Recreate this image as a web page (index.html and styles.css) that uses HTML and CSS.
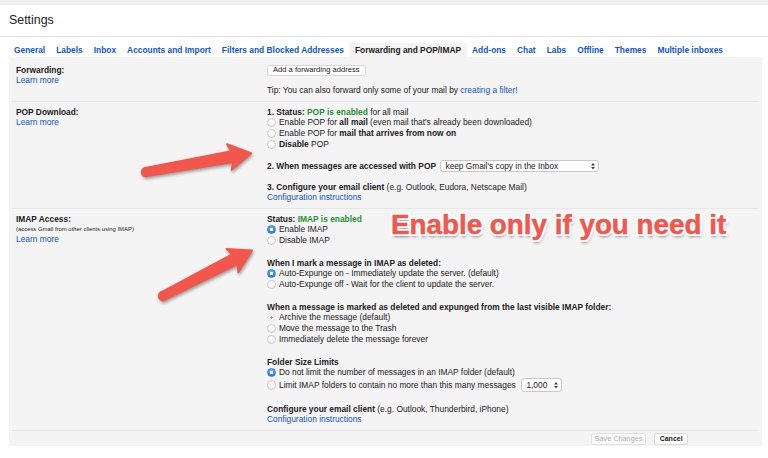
FILE: index.html
```html
<!DOCTYPE html>
<html>
<head>
<meta charset="utf-8">
<title>Settings</title>
<link rel="stylesheet" href="styles.css">
</head>
<body>
<div class="topbar"></div>
<header class="header"><h1 class="title">Settings</h1></header>
<nav class="tabs">
  <a class="tab">General</a>
  <a class="tab">Labels</a>
  <a class="tab">Inbox</a>
  <a class="tab">Accounts and Import</a>
  <a class="tab">Filters and Blocked Addresses</a>
  <a class="tab active">Forwarding and POP/IMAP</a>
  <a class="tab">Add-ons</a>
  <a class="tab">Chat</a>
  <a class="tab">Labs</a>
  <a class="tab">Offline</a>
  <a class="tab">Themes</a>
  <a class="tab">Multiple inboxes</a>
</nav>
<main class="content">
  <section class="row row-tight">
    <div class="label">
      <div class="label-title">Forwarding:</div>
      <a class="link link-block">Learn more</a>
    </div>
    <div class="value">
      <div class="block"><button class="btn btn-forward">Add a forwarding address</button></div>
      <div class="block">Tip: You can also forward only some of your mail by <a class="link">creating a filter!</a></div>
    </div>
  </section>

  <section class="row row-tight">
    <div class="label">
      <div class="label-title">POP Download:</div>
      <a class="link link-block">Learn more</a>
    </div>
    <div class="value">
      <div class="block">
        <div class="line"><b>1. Status: </b><b class="ok">POP is enabled</b> for all mail</div>
        <div class="opt"><span class="radio"></span><span>Enable POP for <b>all mail</b> (even mail that's already been downloaded)</span></div>
        <div class="opt"><span class="radio"></span><span>Enable POP for <b>mail that arrives from now on</b></span></div>
        <div class="opt"><span class="radio"></span><span><b>Disable</b> POP</span></div>
      </div>
      <div class="block line-select">
        <b>2. When messages are accessed with POP</b>
        <span class="select select-wide"><span>keep Gmail's copy in the Inbox</span><svg class="updown" viewBox="0 0 5 8"><path d="M2.5 0 L4.8 3 H0.2 Z M2.5 8 L4.8 5 H0.2 Z"/></svg></span>
      </div>
      <div class="block">
        <div class="line"><b>3. Configure your email client</b> (e.g. Outlook, Eudora, Netscape Mail)</div>
        <a class="link link-block">Configuration instructions</a>
      </div>
    </div>
  </section>

  <section class="row">
    <div class="label">
      <div class="label-title">IMAP Access:</div>
      <div class="label-note">(access Gmail from other clients using IMAP)</div>
      <a class="link link-block">Learn more</a>
    </div>
    <div class="value">
      <div class="block">
        <div class="line"><b>Status: </b><b class="ok">IMAP is enabled</b></div>
        <div class="opt"><span class="radio on"></span><span>Enable IMAP</span></div>
        <div class="opt"><span class="radio"></span><span>Disable IMAP</span></div>
      </div>
      <div class="block">
        <div class="line"><b>When I mark a message in IMAP as deleted:</b></div>
        <div class="opt"><span class="radio on"></span><span>Auto-Expunge on - Immediately update the server. (default)</span></div>
        <div class="opt"><span class="radio"></span><span>Auto-Expunge off - Wait for the client to update the server.</span></div>
      </div>
      <div class="block">
        <div class="line"><b>When a message is marked as deleted and expunged from the last visible IMAP folder:</b></div>
        <div class="opt"><span class="radio dim"></span><span>Archive the message (default)</span></div>
        <div class="opt"><span class="radio"></span><span>Move the message to the Trash</span></div>
        <div class="opt"><span class="radio"></span><span>Immediately delete the message forever</span></div>
      </div>
      <div class="block">
        <div class="line"><b>Folder Size Limits</b></div>
        <div class="opt"><span class="radio on"></span><span>Do not limit the number of messages in an IMAP folder (default)</span></div>
        <div class="opt opt-tall"><span class="radio"></span><span>Limit IMAP folders to contain no more than this many messages</span>
          <span class="select select-small"><span>1,000</span><svg class="updown" viewBox="0 0 5 8"><path d="M2.5 0 L4.8 3 H0.2 Z M2.5 8 L4.8 5 H0.2 Z"/></svg></span>
        </div>
      </div>
      <div class="block">
        <div class="line"><b>Configure your email client</b> (e.g. Outlook, Thunderbird, iPhone)</div>
        <a class="link link-block">Configuration instructions</a>
      </div>
    </div>
  </section>

  <div class="actions">
    <button class="btn btn-save" disabled>Save Changes</button>
    <button class="btn btn-cancel">Cancel</button>
  </div>
</main>

<svg class="annot" width="768" height="458" viewBox="0 0 768 458">
  <g fill="#f3564b" stroke="#f3564b" stroke-width="2" stroke-linejoin="round">
    <g transform="translate(146 172) rotate(-10.16)">
      <circle cx="0" cy="0" r="4.2"/>
      <polygon points="0,-4 87.7,-5.5 84.7,-13 106.7,0 84.7,13 87.7,5.5 0,4"/>
    </g>
    <g transform="translate(163 296) rotate(-27.07)">
      <circle cx="0" cy="0" r="4.2"/>
      <polygon points="0,-4 81,-5.5 78,-13 100,0 78,13 81,5.5 0,4"/>
    </g>
  </g>
</svg>
<div class="callout">Enable only if you need it</div>
</body>
</html>
```
FILE: styles.css
```css
* { box-sizing: border-box; }
html, body { margin: 0; padding: 0; }
body {
  width: 768px;
  height: 458px;
  overflow: hidden;
  position: relative;
  background: #fff;
  color: #222;
  font-family: "Liberation Sans", Arial, sans-serif;
}

.topbar { height: 5px; background: #efefef; }

.header {
  height: 32px;
  border-bottom: 1px solid #e6e6e6;
  padding-left: 9px;
  display: flex;
  align-items: center;
}
.title {
  margin: 0;
  font-size: 12.4px;
  font-weight: normal;
  line-height: 1;
  color: #222;
}

.tabs {
  display: flex;
  padding: 6px 0 0 8.5px;
}
.tab {
  padding: 0 5.5px;
  font-size: 8.4px;
  font-weight: bold;
  line-height: 14px;
  color: #15c;
  text-decoration: none;
  white-space: nowrap;
}
.tab.active { background: #f4f4f4; color: #222; }

.content {
  margin: 0 6px 0 9px;
  background: #f4f4f4;
  padding: 3px 3px 1.5px;
}

.row {
  display: grid;
  grid-template-columns: 251px 1fr;
  padding: 5px 0 5px 4px;
  border-bottom: 1px solid #e7e7e7;
}

.label {
  font-size: 8.4px;
  line-height: 10px;
}
.label-title { font-weight: bold; }
.label-note { font-size: 5.9px; line-height: 10px; }

.link { color: #15c; text-decoration: none; }
.link-block { display: block; }

.value {
  font-size: 8.4px;
  line-height: 10.5px;
  white-space: nowrap;
}
.value .block + .block { margin-top: 11.5px; }
.row-tight .value .block + .block { margin-top: 9.5px; }

.ok { color: #1f9330; }

.opt {
  display: flex;
  align-items: center;
  height: 11px;
  gap: 2.6px;
}
.opt-tall { height: 14px; }

.radio {
  flex: none;
  width: 9.4px;
  height: 9.4px;
  border-radius: 50%;
  border: 1px solid #cacaca;
  background: linear-gradient(#ffffff, #f1f1f1);
}
.radio.on {
  border-color: #2f7de2;
  background:
    radial-gradient(circle, #fff 0, #fff 1.4px, rgba(255,255,255,0) 1.9px),
    linear-gradient(#68acf8, #2a7ae0);
}
.radio.dim {
  border-color: #e3e3e3;
  background:
    radial-gradient(circle, #9a9a9a 0, #9a9a9a 0.9px, rgba(0,0,0,0) 1.4px),
    #f6f6f6;
}

.line-select {
  display: flex;
  align-items: center;
  height: 12.5px;
}

.select {
  display: inline-flex;
  align-items: center;
  justify-content: space-between;
  background: #fff;
  border: 1px solid #c8c8c8;
  border-radius: 3px;
  color: #222;
  font-size: 8.3px;
  line-height: 1;
}
.select-wide {
  width: 159px;
  height: 12.5px;
  margin-left: 4.5px;
  padding: 0 3px 0 4px;
}
.select-small {
  width: 41.5px;
  height: 13.5px;
  margin-left: 2.5px;
  padding: 0 3px 0 4.5px;
  font-size: 8.4px;
}
.updown { width: 4px; height: 6.5px; fill: #333; }

.btn {
  font-family: "Liberation Sans", Arial, sans-serif;
  background: #fff;
  border: 1px solid #d8d8d8;
  border-radius: 2px;
  color: #222;
  margin: 0;
}
.btn-forward {
  display: block;
  height: 10.5px;
  padding: 0 5px;
  font-size: 7.6px;
  line-height: 8px;
}

.actions {
  display: flex;
  justify-content: flex-end;
  gap: 8.3px;
  padding: 2.5px 71px 0 0;
}
.btn-save, .btn-cancel {
  height: 11.7px;
  font-size: 7.3px;
  line-height: 9px;
}
.btn-save {
  width: 55px;
  padding: 0;
  color: #b3b3b3;
  background: #f9f9f9;
  border-color: #e2e2e2;
}
.btn-cancel {
  width: 33.7px;
  padding: 0;
  font-weight: bold;
  font-size: 7px;
}

.annot {
  position: absolute;
  left: 0;
  top: 0;
  pointer-events: none;
  filter: drop-shadow(1px 2px 1.5px rgba(0, 0, 0, 0.35));
}

.callout {
  position: absolute;
  left: 391px;
  top: 211px;
  font-family: "Liberation Sans", Arial, sans-serif;
  font-weight: bold;
  font-size: 27.8px;
  line-height: 28px;
  color: #f3564b;
  -webkit-text-stroke: 0.5px #f3564b;
  white-space: nowrap;
  text-shadow:
    -2.3px 0 0 #fff, 2.3px 0 0 #fff, 0 -2.3px 0 #fff, 0 2.3px 0 #fff,
    -1.7px -1.7px 0 #fff, 1.7px -1.7px 0 #fff, -1.7px 1.7px 0 #fff, 1.7px 1.7px 0 #fff,
    1px 2.5px 3px rgba(0, 0, 0, 0.45);
}
```
